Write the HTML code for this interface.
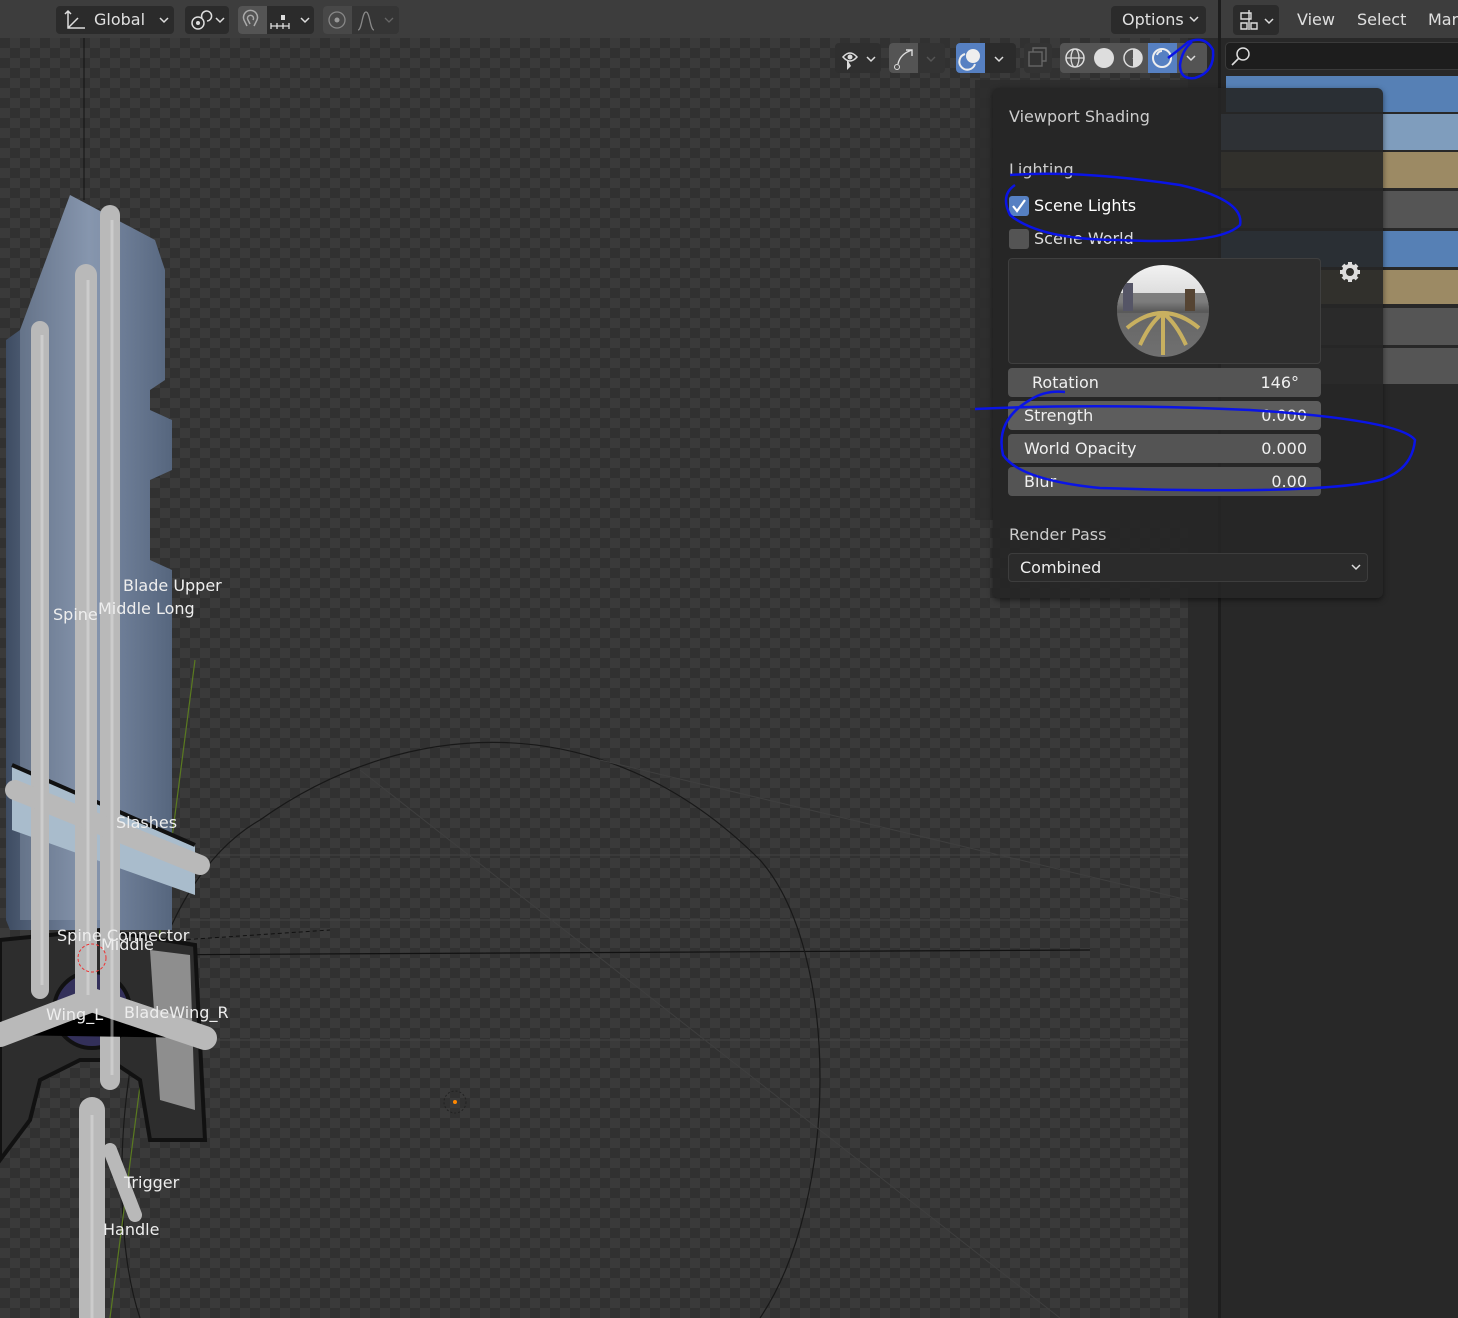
<!DOCTYPE html>
<html><head><meta charset="utf-8"><style>
*{margin:0;padding:0;box-sizing:border-box}
body{width:1458px;height:1318px;overflow:hidden;background:#282828;font-family:"DejaVu Sans","Liberation Sans",sans-serif;color:#e0e0e0;position:relative}
.abs{position:absolute}
.vp{left:0;top:38px;width:1188px;height:1280px;background-color:#363636;background-image:repeating-conic-gradient(#3a3a3a 0 25%,#313131 0 50%);background-size:20px 20px}
.hdr{left:0;top:0;width:1218px;height:38px;background:#3d3d3d}
.btn{position:absolute;background:#2b2b2b;border-radius:4px;height:28px}
.t{position:absolute;font-size:16px;white-space:nowrap}
.field{position:absolute;left:1008px;width:313px;height:29px;background:#545454;border-radius:4px;font-size:16px;color:#f0f0f0}
.field span{position:absolute;top:5px}
.row{position:absolute;left:1221px;width:237px}
</style></head><body>
<div class="abs vp"></div>
<svg class="abs" style="left:0;top:0" width="1188" height="1318">
<defs><linearGradient id="bl" x1="0" y1="0" x2="1" y2="0"><stop offset="0" stop-color="#3e4c62"/><stop offset=".5" stop-color="#7c8ca6"/><stop offset="1" stop-color="#56667e"/></linearGradient>
<linearGradient id="rod" x1="0" y1="0" x2="1" y2="0"><stop offset="0" stop-color="#8e8e8e"/><stop offset=".5" stop-color="#c4c4c4"/><stop offset="1" stop-color="#8a8a8a"/></linearGradient></defs>
<path d="M170 855 L1188 855 M190 920 L1188 920 M190 1040 L1188 1040" stroke="#444" stroke-width="1"/>
<path d="M120 955 L1090 950" stroke="#111" stroke-width="1.2"/>
<path d="M180 940 L330 930" stroke="#111" stroke-dasharray="4 3"/>
<path d="M140 1318 C100 1200 120 900 260 820 C400 720 600 700 760 860 C840 950 840 1200 760 1318" fill="none" stroke="#181818" stroke-width="1.2"/>
<path d="M360 770 L1060 1318 M600 760 L1188 900" stroke="#3f3f3f"/>
<path d="M84 38 L84 200" stroke="#111"/>
<path d="M195 660 L110 1318" stroke="#5a7a20" stroke-width="1.2"/>
<circle cx="455" cy="1102" r="11" fill="none" stroke="#222" stroke-dasharray="2 2"/>
<circle cx="455" cy="1102" r="2" fill="#f80"/>
<path d="M6 340 L20 330 L70 195 L155 240 L165 270 L165 380 L150 390 L150 410 L172 420 L172 470 L150 480 L150 560 L172 570 L172 930 L10 930 L6 920 Z" fill="url(#bl)"/>
<path d="M20 330 L70 195 L120 222 L110 920 L20 920 Z" fill="#9aa8bc" opacity=".35"/>
<path d="M12 765 L195 845 L195 895 L12 830 Z" fill="#a9bccc"/>
<path d="M12 765 L195 845" stroke="#111" stroke-width="4"/>
<path d="M0 940 L100 930 L195 945 L205 1140 L150 1140 L140 1080 L110 1060 L80 1060 L40 1080 L30 1120 L0 1160 Z" fill="#2d2d2d" stroke="#111" stroke-width="4"/>
<path d="M150 950 L190 955 L195 1110 L160 1100 Z" fill="#8e8e8e"/>
<circle cx="92" cy="1010" r="38" fill="#33305a" stroke="#111" stroke-width="4"/>
<g stroke="#b9b9b9" stroke-linecap="round">
<path d="M110 215 L110 1080" stroke-width="20"/>
<path d="M86 275 L86 1000" stroke-width="22"/>
<path d="M40 330 L40 990" stroke-width="18"/>
<path d="M15 790 L200 865" stroke-width="20"/>
<path d="M0 1035 L92 1000 L205 1038" stroke-width="24"/>
<path d="M92 1110 L92 1318" stroke-width="26"/>
<path d="M110 1150 L135 1215" stroke-width="14"/>
</g>
<g stroke="#e0e0e0" stroke-width="3" opacity=".5"><path d="M112 220 L112 1075 M88 280 L88 995 M42 335 L42 985 M92 1115 L92 1318"/></g>
<circle cx="92" cy="958" r="14" fill="none" stroke="#e33" stroke-dasharray="3 2"/>
<g font-family="DejaVu Sans" font-size="16" fill="#eee">
<text x="123" y="591">Blade Upper</text><text x="53" y="620">Spine</text><text x="98" y="614">Middle Long</text>
<text x="116" y="828">Slashes</text><text x="57" y="941">Spine Connector</text><text x="101" y="950">Middle</text>
<text x="46" y="1020">Wing_L</text><text x="124" y="1018">BladeWing_R</text><text x="124" y="1188">Trigger</text><text x="103" y="1235">Handle</text>
</g>
</svg>
<div class="abs" style="left:975px;top:80px;width:213px;height:440px;background:#2d2d2d;opacity:.9"></div>
<div class="abs" style="left:1188px;top:38px;width:30px;height:1280px;background:#2a2a2a"></div>
<div class="abs" style="left:1218px;top:0;width:3px;height:1318px;background:#1d1d1d"></div>
<div class="abs hdr"></div>
<div class="btn" style="left:56px;top:6px;width:118px"></div>
<div class="t" style="left:94px;top:10px">Global</div>
<svg class="abs" style="left:62px;top:8px" width="110" height="24"><path d="M6 3 v17 h17 M6 20 l10 -10 M3 6 l3-3 3 3" stroke="#ddd" fill="none" stroke-width="1.5"/><path d="M98 10 l4 4 4-4" stroke="#ddd" fill="none" stroke-width="1.5"/></svg>
<div class="btn" style="left:185px;top:6px;width:44px"></div>
<svg class="abs" style="left:186px;top:6px" width="44" height="28"><circle cx="12" cy="17" r="6" stroke="#ddd" fill="none" stroke-width="1.5"/><circle cx="12" cy="17" r="2" fill="#ddd"/><path d="M16 12 a5 5 0 1 1 5 3" stroke="#ddd" fill="none" stroke-width="1.5"/><path d="M30 12 l4 4 4-4" stroke="#ddd" fill="none" stroke-width="1.5"/></svg>
<div class="btn" style="left:238px;top:6px;width:76px"></div>
<div class="abs" style="left:238px;top:6px;width:29px;height:28px;background:#545454;border-radius:4px 0 0 4px"></div>
<svg class="abs" style="left:238px;top:6px" width="76" height="28"><path d="M9 20 l-3-6 a7 7 0 1 1 13 0 l-3 6 M12 18 l-2-4 a3 3 0 1 1 5 0" stroke="#aaa" fill="none" stroke-width="1.5"/><path d="M33 20 h18 M33 17 v6 M39 17 v6 M45 17 v6 M51 17 v6" stroke="#ddd" stroke-width="1.3"/><rect x="43" y="9" width="4" height="5" fill="#ddd"/><path d="M63 12 l4 4 4-4" stroke="#ddd" fill="none" stroke-width="1.5"/></svg>
<div class="btn" style="left:323px;top:6px;width:76px;background:#353535"></div>
<div class="abs" style="left:323px;top:6px;width:29px;height:28px;background:#484848;border-radius:4px 0 0 4px"></div>
<svg class="abs" style="left:323px;top:6px" width="76" height="28"><circle cx="14" cy="14" r="8" stroke="#888" fill="none" stroke-width="1.3"/><circle cx="14" cy="14" r="2.5" fill="#999"/><path d="M35 24 c4 0 4-18 8-18 s4 18 8 18" stroke="#888" fill="none" stroke-width="1.3"/><path d="M62 12 l4 4 4-4" stroke="#666" fill="none" stroke-width="1.3"/></svg>
<div class="btn" style="left:1111px;top:6px;width:95px"></div>
<div class="t" style="left:1122px;top:10px">Options</div>
<svg class="abs" style="left:1188px;top:14px" width="14" height="12"><path d="M2 3 l4 4 4-4" stroke="#ddd" fill="none" stroke-width="1.5"/></svg>
<div class="btn" style="left:835px;top:43px;width:46px;height:30px;background:#2f2f2f"></div>
<svg class="abs" style="left:835px;top:43px" width="46" height="30"><path d="M8 14 q7-8 14 0 q-7 8-14 0z" stroke="#ddd" fill="none" stroke-width="1.5"/><circle cx="15" cy="14" r="2.5" fill="#ddd"/><path d="M12 16 l0 11 4-4 z" fill="#ddd"/><path d="M32 14 l4 4 4-4" stroke="#ddd" fill="none" stroke-width="1.5"/></svg>
<div class="btn" style="left:889px;top:43px;width:56px;height:30px;background:#333"></div>
<div class="abs" style="left:889px;top:43px;width:29px;height:30px;background:#545454;border-radius:4px 0 0 4px"></div>
<svg class="abs" style="left:889px;top:43px" width="56" height="30"><circle cx="8" cy="24" r="2.5" stroke="#ddd" fill="none"/><path d="M9 21 q2-10 14-14 M17 7 h6 v6" stroke="#ddd" fill="none" stroke-width="1.4"/><path d="M38 14 l4 4 4-4" stroke="#555" fill="none" stroke-width="1.4"/></svg>
<div class="btn" style="left:956px;top:43px;width:60px;height:30px;background:#2b2b2b"></div>
<div class="abs" style="left:956px;top:43px;width:29px;height:30px;background:#5680c2;border-radius:4px 0 0 4px"></div>
<svg class="abs" style="left:956px;top:43px" width="60" height="30"><circle cx="17" cy="13" r="7" fill="#eee"/><path d="M9 11 a8 8 0 1 0 10 10" stroke="#eee" fill="none" stroke-width="2"/><path d="M39 14 l4 4 4-4" stroke="#ddd" fill="none" stroke-width="1.5"/></svg>
<div class="btn" style="left:1024px;top:43px;width:28px;height:30px;background:#333"></div>
<svg class="abs" style="left:1024px;top:43px" width="28" height="30"><rect x="5" y="9" width="13" height="14" stroke="#666" fill="none" stroke-width="1.4"/><path d="M9 9 v-4 h13 v13 h-4" stroke="#666" fill="none" stroke-width="1.4"/></svg>
<div class="btn" style="left:1060px;top:43px;width:147px;height:30px;background:#545454"></div>
<div class="abs" style="left:1148px;top:43px;width:29px;height:30px;background:#5680c2"></div>
<svg class="abs" style="left:1060px;top:43px" width="147" height="30"><circle cx="15" cy="15" r="9" stroke="#ddd" fill="none" stroke-width="1.5"/><ellipse cx="15" cy="15" rx="4" ry="9" stroke="#ddd" fill="none" stroke-width="1.3"/><path d="M6 15 h18" stroke="#ddd" stroke-width="1.3"/><circle cx="44" cy="15" r="10" fill="#ddd"/><circle cx="73" cy="15" r="9" stroke="#ddd" fill="none" stroke-width="1.5"/><path d="M73 6 a9 9 0 0 1 0 18 z" fill="#ddd"/><path d="M73 15 l6 6" stroke="#ddd" stroke-width="1.5"/><circle cx="102" cy="15" r="9" stroke="#eee" fill="none" stroke-width="2"/><path d="M97 12 a5 5 0 0 1 5 -4" stroke="#eee" fill="none" stroke-width="2"/><path d="M127 13 l4 4 4-4" stroke="#ddd" fill="none" stroke-width="1.5"/></svg>
<div class="abs" style="left:1221px;top:0;width:237px;height:38px;background:#3d3d3d"></div>
<div class="btn" style="left:1233px;top:5px;width:46px;height:30px"></div>
<svg class="abs" style="left:1233px;top:5px" width="46" height="30"><path d="M8 8 h10 v6 h-10z M16 5 v20 M8 18 h6 v6 h-6z M18 18 h6 v6 h-6z" stroke="#ddd" fill="none" stroke-width="1.4"/><path d="M32 14 l4 4 4-4" stroke="#ddd" fill="none" stroke-width="1.5"/></svg>
<div class="t" style="left:1297px;top:10px">View</div>
<div class="t" style="left:1357px;top:10px">Select</div>
<div class="t" style="left:1428px;top:10px">Mar</div>
<div class="abs" style="left:1225px;top:42px;width:240px;height:28px;background:#1d1d1d;border:1px solid #3a3a3a;border-radius:5px"></div>
<svg class="abs" style="left:1228px;top:44px" width="26" height="26"><circle cx="15" cy="10" r="6" stroke="#ddd" fill="none" stroke-width="1.5"/><path d="M11 14 l-7 7" stroke="#ddd" stroke-width="1.6"/></svg>
<div class="row" style="top:76px;height:36px;background:#5680b5;left:1226px"></div>
<div class="row" style="top:114px;height:36px;background:#7f9dbd"></div>
<div class="row" style="top:152px;height:36px;background:#9c8a64"></div>
<div class="row" style="top:191px;height:37px;background:#555"></div>
<div class="row" style="top:231px;height:36px;background:#5680b5"></div>
<div class="row" style="top:270px;height:34px;background:#9c8a64"></div>
<div class="row" style="top:308px;height:37px;background:#555"></div>
<div class="row" style="top:348px;height:36px;background:#555"></div>
<div class="abs" style="left:993px;top:88px;width:390px;height:510px;background:rgba(38,38,38,.9);border-radius:6px;box-shadow:0 2px 6px rgba(0,0,0,.5)"></div>
<div class="t" style="left:1009px;top:107px;color:#ccc">Viewport Shading</div>
<div class="t" style="left:1009px;top:160px;color:#ccc">Lighting</div>
<div class="abs" style="left:1009px;top:196px;width:20px;height:20px;background:#5680c2;border-radius:3px"></div>
<svg class="abs" style="left:1009px;top:196px" width="20" height="20"><path d="M4 10 l4 5 8-11" stroke="#fff" fill="none" stroke-width="2.2"/></svg>
<div class="t" style="left:1034px;top:196px;color:#fff">Scene Lights</div>
<div class="abs" style="left:1009px;top:229px;width:20px;height:20px;background:#545454;border-radius:3px"></div>
<div class="t" style="left:1034px;top:229px;color:#ddd">Scene World</div>
<div class="abs" style="left:1008px;top:258px;width:313px;height:106px;background:#2e2e2e;border:1px solid #3f3f3f;border-radius:4px"></div>
<svg class="abs" style="left:1115px;top:263px" width="96" height="96"><defs><linearGradient id="g" x1="0" y1="0" x2="0" y2="1"><stop offset="0" stop-color="#f2f2f2"/><stop offset=".4" stop-color="#d8d8d8"/><stop offset=".5" stop-color="#666"/><stop offset="1" stop-color="#707070"/></linearGradient><clipPath id="c"><circle cx="48" cy="48" r="46"/></clipPath></defs><circle cx="48" cy="48" r="46" fill="url(#g)"/><g clip-path="url(#c)"><rect x="0" y="30" width="96" height="20" fill="#555" opacity=".7"/><rect x="8" y="20" width="10" height="28" fill="#556"/><rect x="70" y="26" width="10" height="22" fill="#543"/></g><path d="M12 65 q36-30 72 0 M25 82 q10-22 23-32 M71 82 q-10-22-23-32 M48 92 v-42" stroke="#c8b060" stroke-width="4" fill="none"/></svg>
<svg class="abs" style="left:1338px;top:260px" width="24" height="24"><circle cx="12" cy="12" r="6" fill="none" stroke="#ddd" stroke-width="4"/><g stroke="#ddd" stroke-width="4"><path d="M12 2v4M12 18v4M2 12h4M18 12h4M5 5l3 3M16 16l3 3M5 19l3-3M16 8l3-3"/></g></svg>
<div class="field" style="top:368px"><span style="left:24px">Rotation</span><span style="right:22px">146°</span></div>
<div class="field" style="top:401px;background:#5d5d5d"><span style="left:16px">Strength</span><span style="right:14px">0.000</span></div>
<div class="field" style="top:434px"><span style="left:16px">World Opacity</span><span style="right:14px">0.000</span></div>
<div class="field" style="top:467px"><span style="left:16px">Blur</span><span style="right:14px">0.00</span></div>
<div class="t" style="left:1009px;top:525px;color:#ccc">Render Pass</div>
<div class="abs" style="left:1008px;top:553px;width:360px;height:29px;background:#2b2b2b;border:1px solid #3d3d3d;border-radius:4px"></div>
<div class="t" style="left:1020px;top:558px;color:#eee">Combined</div>
<svg class="abs" style="left:1350px;top:562px" width="14" height="12"><path d="M2 3 l4 4 4-4" stroke="#ddd" fill="none" stroke-width="1.5"/></svg>
<svg class="abs" style="left:0;top:0" width="1458" height="600" fill="none" stroke="#0a14e6" stroke-width="2.5">
<path d="M1168 58 Q1185 45 1188 42 Q1205 35 1213 50 Q1215 72 1195 78 Q1180 80 1180 65 Q1182 50 1192 42"/>
<path d="M1010 175 Q1080 170 1180 185 Q1245 200 1240 225 Q1220 245 1120 240 Q1040 240 1010 215 Q1000 195 1015 185"/>
<path d="M975 409 Q1100 403 1250 410 Q1400 420 1415 440 Q1412 470 1380 480 Q1320 495 1100 488 Q1020 480 1003 455 Q995 420 1030 400 Q1045 390 1065 392"/>
</svg>
</body></html>
